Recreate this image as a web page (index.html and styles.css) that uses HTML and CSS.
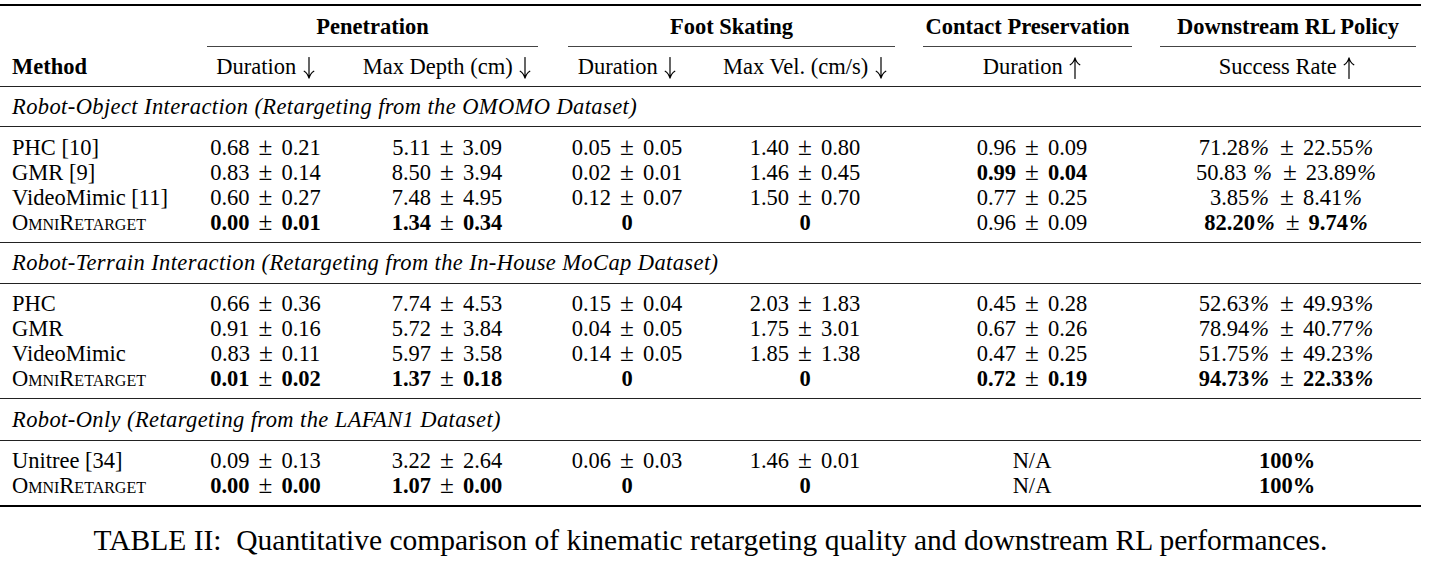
FILE: index.html
```html
<!DOCTYPE html>
<html lang="en">
<head>
<meta charset="utf-8">
<title>Table II</title>
<link rel="stylesheet" href="styles.css">
</head>
<body>
<figure class="table-figure">
<table class="results">
  <colgroup>
    <col class="c-method">
    <col class="c-pen-dur">
    <col class="c-pen-depth">
    <col class="c-foot-dur">
    <col class="c-foot-vel">
    <col class="c-contact">
    <col class="c-rl">
  </colgroup>
  <thead>
    <tr class="group-row">
      <th></th>
      <th colspan="2"><div class="cmid cmid-pen">Penetration</div></th>
      <th colspan="2"><div class="cmid cmid-foot">Foot Skating</div></th>
      <th><div class="cmid cmid-contact">Contact Preservation</div></th>
      <th><div class="cmid cmid-rl">Downstream RL Policy</div></th>
    </tr>
    <tr class="metric-row">
      <th class="method">Method</th>
      <th>Duration <svg class="arrow" viewBox="0 0 12 22" aria-label="↓"><path d="M6 0.5V20.5M1.2 14.2Q4.6 16.2 6 21.2Q7.4 16.2 10.8 14.2"/></svg></th>
      <th>Max Depth (cm) <svg class="arrow" viewBox="0 0 12 22" aria-label="↓"><path d="M6 0.5V20.5M1.2 14.2Q4.6 16.2 6 21.2Q7.4 16.2 10.8 14.2"/></svg></th>
      <th>Duration <svg class="arrow" viewBox="0 0 12 22" aria-label="↓"><path d="M6 0.5V20.5M1.2 14.2Q4.6 16.2 6 21.2Q7.4 16.2 10.8 14.2"/></svg></th>
      <th>Max Vel. (cm/s) <svg class="arrow" viewBox="0 0 12 22" aria-label="↓"><path d="M6 0.5V20.5M1.2 14.2Q4.6 16.2 6 21.2Q7.4 16.2 10.8 14.2"/></svg></th>
      <th>Duration <svg class="arrow" viewBox="0 0 12 22" aria-label="↑"><path d="M6 21.5V1.5M1.2 7.8Q4.6 5.8 6 0.8Q7.4 5.8 10.8 7.8"/></svg></th>
      <th>Success Rate <svg class="arrow" viewBox="0 0 12 22" aria-label="↑"><path d="M6 21.5V1.5M1.2 7.8Q4.6 5.8 6 0.8Q7.4 5.8 10.8 7.8"/></svg></th>
    </tr>
  </thead>
  <tbody>
    <tr class="section">
      <td colspan="7">Robot-Object Interaction (Retargeting from the OMOMO Dataset)</td>
    </tr>
    <tr class="first first-loose">
      <td class="method">PHC [10]</td>
      <td>0.68<span class="pm">±</span>0.21</td>
      <td>5.11<span class="pm">±</span>3.09</td>
      <td>0.05<span class="pm">±</span>0.05</td>
      <td>1.40<span class="pm">±</span>0.80</td>
      <td>0.96<span class="pm">±</span>0.09</td>
      <td>71.28<span class="pct">%</span><span class="pm">±</span>22.55<span class="pct">%</span></td>
    </tr>
    <tr>
      <td class="method">GMR [9]</td>
      <td>0.83<span class="pm">±</span>0.14</td>
      <td>8.50<span class="pm">±</span>3.94</td>
      <td>0.02<span class="pm">±</span>0.01</td>
      <td>1.46<span class="pm">±</span>0.45</td>
      <td><b>0.99</b><span class="pm">±</span><b>0.04</b></td>
      <td>50.83 <span class="pct">%</span><span class="pm">±</span>23.89<span class="pct">%</span></td>
    </tr>
    <tr>
      <td class="method">VideoMimic [11]</td>
      <td>0.60<span class="pm">±</span>0.27</td>
      <td>7.48<span class="pm">±</span>4.95</td>
      <td>0.12<span class="pm">±</span>0.07</td>
      <td>1.50<span class="pm">±</span>0.70</td>
      <td>0.77<span class="pm">±</span>0.25</td>
      <td>3.85<span class="pct">%</span><span class="pm">±</span>8.41<span class="pct">%</span></td>
    </tr>
    <tr class="last">
      <td class="method ours">OmniRetarget</td>
      <td><b>0.00</b><span class="pm">±</span><b>0.01</b></td>
      <td><b>1.34</b><span class="pm">±</span><b>0.34</b></td>
      <td><b>0</b></td>
      <td><b>0</b></td>
      <td>0.96<span class="pm">±</span>0.09</td>
      <td><b>82.20<span class="pct">%</span></b><span class="pm">±</span><b>9.74<span class="pct">%</span></b></td>
    </tr>

    <tr class="section section-b">
      <td colspan="7">Robot-Terrain Interaction (Retargeting from the In-House MoCap Dataset)</td>
    </tr>
    <tr class="first">
      <td class="method">PHC</td>
      <td>0.66<span class="pm">±</span>0.36</td>
      <td>7.74<span class="pm">±</span>4.53</td>
      <td>0.15<span class="pm">±</span>0.04</td>
      <td>2.03<span class="pm">±</span>1.83</td>
      <td>0.45<span class="pm">±</span>0.28</td>
      <td>52.63<span class="pct">%</span><span class="pm">±</span>49.93<span class="pct">%</span></td>
    </tr>
    <tr>
      <td class="method">GMR</td>
      <td>0.91<span class="pm">±</span>0.16</td>
      <td>5.72<span class="pm">±</span>3.84</td>
      <td>0.04<span class="pm">±</span>0.05</td>
      <td>1.75<span class="pm">±</span>3.01</td>
      <td>0.67<span class="pm">±</span>0.26</td>
      <td>78.94<span class="pct">%</span><span class="pm">±</span>40.77<span class="pct">%</span></td>
    </tr>
    <tr>
      <td class="method">VideoMimic</td>
      <td>0.83<span class="pm">±</span>0.11</td>
      <td>5.97<span class="pm">±</span>3.58</td>
      <td>0.14<span class="pm">±</span>0.05</td>
      <td>1.85<span class="pm">±</span>1.38</td>
      <td>0.47<span class="pm">±</span>0.25</td>
      <td>51.75<span class="pct">%</span><span class="pm">±</span>49.23<span class="pct">%</span></td>
    </tr>
    <tr class="last">
      <td class="method ours">OmniRetarget</td>
      <td><b>0.01</b><span class="pm">±</span><b>0.02</b></td>
      <td><b>1.37</b><span class="pm">±</span><b>0.18</b></td>
      <td><b>0</b></td>
      <td><b>0</b></td>
      <td><b>0.72</b><span class="pm">±</span><b>0.19</b></td>
      <td><b>94.73<span class="pct">%</span></b><span class="pm">±</span><b>22.33<span class="pct">%</span></b></td>
    </tr>

    <tr class="section section-c">
      <td colspan="7">Robot-Only (Retargeting from the LAFAN1 Dataset)</td>
    </tr>
    <tr class="first">
      <td class="method">Unitree [34]</td>
      <td>0.09<span class="pm">±</span>0.13</td>
      <td>3.22<span class="pm">±</span>2.64</td>
      <td>0.06<span class="pm">±</span>0.03</td>
      <td>1.46<span class="pm">±</span>0.01</td>
      <td>N/A</td>
      <td><b>100%</b></td>
    </tr>
    <tr class="last final">
      <td class="method ours">OmniRetarget</td>
      <td><b>0.00</b><span class="pm">±</span><b>0.00</b></td>
      <td><b>1.07</b><span class="pm">±</span><b>0.00</b></td>
      <td><b>0</b></td>
      <td><b>0</b></td>
      <td>N/A</td>
      <td><b>100%</b></td>
    </tr>
  </tbody>
</table>
<figcaption class="caption">TABLE II:&nbsp; Quantitative comparison of kinematic retargeting quality and downstream RL performances.</figcaption>
</figure>
</body>
</html>
```

FILE: styles.css
```css
html, body {
  margin: 0;
  padding: 0;
  background: #fff;
}

body {
  font-family: "Liberation Serif", "Times New Roman", serif;
  color: #000;
}

.table-figure {
  margin: 0;
  width: 1421px;
  padding-top: 4px;
}

.results {
  width: 1421px;
  table-layout: fixed;
  border-collapse: separate;
  border-spacing: 0;
  font-size: 22.5px;
  line-height: 25px;
}

.c-method    { width: 192px; }
.c-pen-dur   { width: 147px; }
.c-pen-depth { width: 216px; }
.c-foot-dur  { width: 144px; }
.c-foot-vel  { width: 212px; }
.c-contact   { width: 242px; }
.c-rl        { width: 268px; }

.results th,
.results td {
  padding: 0;
  text-align: center;
  white-space: nowrap;
  vertical-align: top;
}

.results .method {
  text-align: left;
  padding-left: 12px;
}

/* group header row with top rule and trimmed cmidrules */
.group-row th {
  border-top: 2px solid #000;
  padding-top: 8px;
  font-weight: bold;
}

.cmid {
  padding-bottom: 7px;
  border-bottom: 1px solid #444;
}
.cmid-pen     { margin: 0 17px 0 15px; }
.cmid-foot    { margin: 0 16px 0 13px; }
.cmid-contact { margin: 0 21px 0 12px; }
.cmid-rl      { margin: 0 5px 0 7px; }

.metric-row th {
  font-weight: normal;
  padding-top: 7px;
  padding-bottom: 7px;
  border-bottom: 1px solid #222;
}
.metric-row th.method {
  font-weight: bold;
}

.arrow {
  width: 12px;
  height: 22px;
  vertical-align: -5px;
  margin-left: 1px;
}
.arrow path {
  fill: none;
  stroke: #000;
  stroke-width: 1.2;
  stroke-linecap: round;
  stroke-linejoin: round;
}

.pm {
  font-weight: normal;
  font-size: 1.12em;
  line-height: 0;
  margin: 0 9px;
}

.pct {
  font-style: italic;
  margin-left: 1px;
  letter-spacing: 2px;
}

.section td {
  text-align: left;
  padding: 7px 0 7px 12px;
  font-style: italic;
  letter-spacing: 0.4px;
  border-bottom: 1px solid #222;
}
.section-b td { padding-bottom: 8px; }
.section-c td { padding-top: 8px; padding-bottom: 8px; }

.first td { padding-top: 7px; }
.first-loose td { padding-top: 8px; }

.last td {
  padding-bottom: 7px;
  border-bottom: 1px solid #222;
}
.final td {
  border-bottom: 2px solid #000;
}

.ours {
  font-variant: small-caps;
}

.caption {
  margin: 16px 0 0;
  text-align: center;
  font-size: 29.5px;
  line-height: 34px;
}
```
